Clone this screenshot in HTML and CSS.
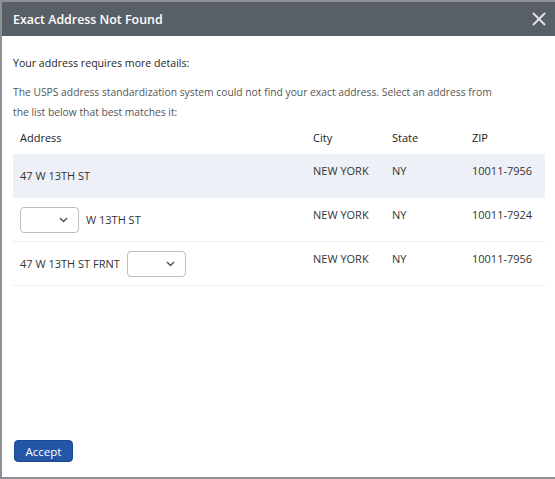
FILE: index.html
```html
<!DOCTYPE html>
<html>
<head>
<meta charset="utf-8">
<link rel="stylesheet" href="styles.css">
</head>
<body>
<div class="dialog">
  <div class="header">
    <span class="title">Exact Address Not Found</span>
    <svg class="close" width="16" height="16" viewBox="0 0 16 16"><path d="M2 2 L14 14 M14 2 L2 14" stroke="#e4e6e8" stroke-width="1.8" fill="none"/></svg>
  </div>
  <div class="content">
    <p class="subtitle">Your address requires more details:</p>
    <p class="desc">The USPS address standardization system could not find your exact address. Select an address from the list below that best matches it:</p>
    <table class="matches">
      <colgroup><col class="c-addr"><col class="c-city"><col class="c-state"><col class="c-zip"></colgroup>
      <thead>
        <tr><th>Address</th><th>City</th><th>State</th><th>ZIP</th></tr>
      </thead>
      <tbody>
        <tr class="selected">
          <td><div class="addr">47 W 13TH ST</div></td>
          <td>NEW YORK</td><td>NY</td><td>10011-7956</td>
        </tr>
        <tr>
          <td><div class="addr"><span class="select"><svg width="9" height="6" viewBox="0 0 9 6"><path d="M1 1 L4.5 4.5 L8 1" stroke="#555" stroke-width="1.5" fill="none"/></svg></span>W 13TH ST</div></td>
          <td>NEW YORK</td><td>NY</td><td>10011-7924</td>
        </tr>
        <tr>
          <td><div class="addr">47 W 13TH ST FRNT<span class="select"><svg width="9" height="6" viewBox="0 0 9 6"><path d="M1 1 L4.5 4.5 L8 1" stroke="#555" stroke-width="1.5" fill="none"/></svg></span></div></td>
          <td>NEW YORK</td><td>NY</td><td>10011-7956</td>
        </tr>
      </tbody>
    </table>
  </div>
  <div class="footer">
    <button class="accept">Accept</button>
  </div>
</div>
</body>
</html>
```
FILE: styles.css
```css
html, body {
  margin: 0;
  padding: 0;
  height: 100%;
}
body {
  background: #8c8f93;
  font-family: "Open Sans", "Liberation Sans", sans-serif;
  padding: 2px 0 2px 2px;
  box-sizing: border-box;
}
.dialog {
  height: 475px;
  background: #fff;
  display: flex;
  flex-direction: column;
}
.header {
  height: 34px;
  background: #595f67;
  display: flex;
  align-items: center;
  justify-content: space-between;
  padding: 0 8px 0 11px;
}
.title {
  color: #fff;
  font-size: 12.4px;
  font-weight: 600;
}
.close {
  display: block;
}
.content {
  padding: 0 10px 0 11px;
}
.subtitle {
  margin: 17px 0 0;
  font-size: 10.6px;
  line-height: 20px;
  color: #1e1e1e;
}
.desc {
  margin: 9px 0 0;
  max-width: 495px;
  font-size: 10.3px;
  line-height: 20px;
  color: #555;
}
.matches {
  width: 532px;
  border-collapse: collapse;
  table-layout: fixed;
  font-size: 11px;
  color: #333;
}
.c-addr { width: 293px; }
.c-city { width: 79px; }
.c-state { width: 80px; }
.c-zip { width: 80px; }
.matches th {
  text-align: left;
  font-weight: 400;
  font-size: 11px;
  color: #222;
  line-height: 20px;
  padding: 6px 7px;
}
.matches td {
  vertical-align: top;
  line-height: 20px;
  padding: 7px 7px 6px 7px;
  border-bottom: 1px solid #eceef0;
}
.matches tr.selected td {
  background: #edf1f7;
  border-bottom-color: #edf1f7;
}
.addr {
  display: flex;
  align-items: center;
  gap: 7px;
  min-height: 30px;
}
.select {
  width: 59px;
  height: 26px;
  box-sizing: border-box;
  border: 1px solid #b9bcc0;
  border-radius: 4px;
  display: flex;
  align-items: center;
  justify-content: flex-end;
  padding-right: 10px;
  background: #fff;
}
.select svg { display: block; }
.footer {
  margin-top: auto;
  padding: 0 0 15px 12px;
}
.accept {
  width: 59px;
  height: 22px;
  background: #2356a7;
  color: #fff;
  border: 1px solid #1d4a92;
  border-radius: 4px;
  font-family: "Open Sans", "Liberation Sans", sans-serif;
  font-size: 11.5px;
  padding: 0;
  display: block;
}
```
